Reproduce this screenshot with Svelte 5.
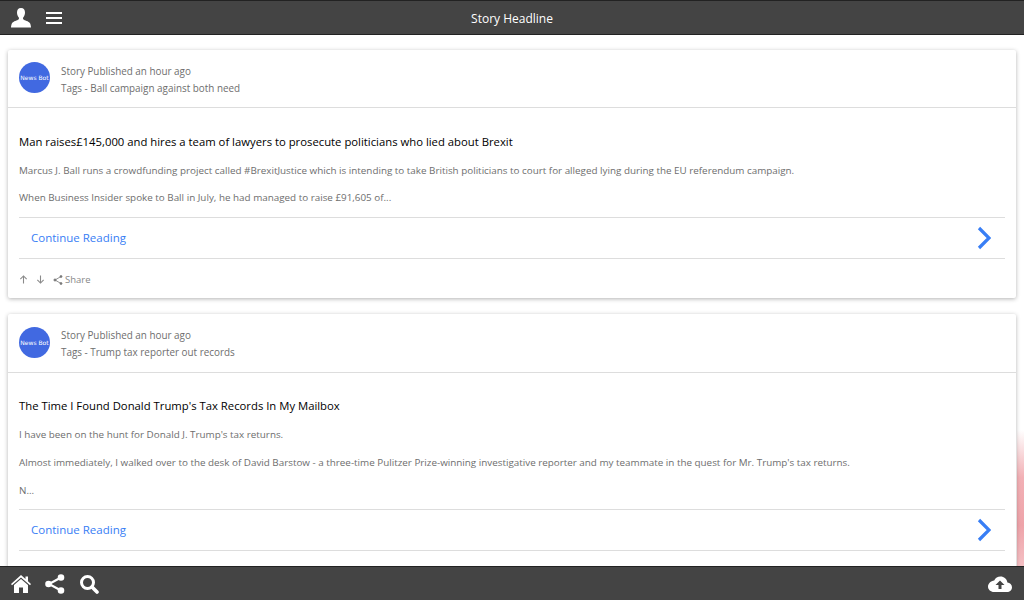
<script>
  const stories = [
    {
      tags: "Ball campaign against both need",
      title: "Man raises£145,000 and hires a team of lawyers to prosecute politicians who lied about Brexit",
      paras: [
        "Marcus J. Ball runs a crowdfunding project called #BrexitJustice which is intending to take British politicians to court for alleged lying during the EU referendum campaign.",
        "When Business Insider spoke to Ball in July, he had managed to raise £91,605 of..."
      ]
    },
    {
      tags: "Trump tax reporter out records",
      title: "The Time I Found Donald Trump's Tax Records In My Mailbox",
      paras: [
        "I have been on the hunt for Donald J. Trump's tax returns.",
        "Almost immediately, I walked over to the desk of David Barstow - a three-time Pulitzer Prize-winning investigative reporter and my teammate in the quest for Mr. Trump's tax returns.",
        "N..."
      ]
    }
  ];
</script>

<div class="page">
  <header class="topbar">
    <svg class="user" viewBox="0 0 20 20" width="20" height="20" fill="#fff">
      <path d="M10 0C7.2 0 6 2 6 4.6c0 2 .7 3.8 1.8 5 .3.4.3 1.500-.3 2-.9.8-5.200 1.700-6.500 3.700C.5 16.200 0 18 0 19.500h20c0-1.500-.5-3.300-1-4.200-1.300-2-5.600-2.900-6.500-3.700-.6-.5-.6-1.600-.3-2 1.100-1.200 1.800-3 1.800-5C14 2 12.800 0 10 0z"/>
    </svg>
    <div class="burger"><span></span><span></span><span></span></div>
    <h1>Story Headline</h1>
  </header>

  <main class="feed">
    <div class="blush"></div>
    {#each stories as s, i}
      <article class="card">
        <div class="meta">
          <div class="avatar">News Bot</div>
          <div class="metatext">
            <div>Story Published an hour ago</div>
            <div>Tags - {s.tags}</div>
          </div>
        </div>
        <div class="body">
          <h2>{s.title}</h2>
          {#each s.paras as p}
            <p>{p}</p>
          {/each}
          <div class="more">
            <span>Continue Reading</span>
            <svg viewBox="0 0 14 24" width="14" height="24" fill="none" stroke="#387ef5" stroke-width="3.200">
              <path d="M2 2l10 10L2 22"/>
            </svg>
          </div>
          <!-- second card's row sits under the bottom bar -->
          {#if i === 0}
            <div class="actions">
              <svg viewBox="0 0 10 10" width="9" height="9" fill="none" stroke="#8a8a8a" stroke-width="1.200"><path d="M5 9.500V1M1.500 4.500L5 1l3.500 3.500"/></svg>
              <svg class="down" viewBox="0 0 10 10" width="9" height="9" fill="none" stroke="#8a8a8a" stroke-width="1.200"><path d="M5 .5V9M1.500 5.500L5 9l3.500-3.500"/></svg>
              <span class="share">
                <svg viewBox="0 0 10 10" width="10" height="10" fill="#777" stroke="#777" stroke-width=".8"><path d="M8 1.500L2 5l6 3.500" fill="none"/><circle cx="8" cy="1.500" r="1"/><circle cx="2" cy="5" r="1.100"/><circle cx="8" cy="8.500" r="1"/></svg>
                Share
              </span>
            </div>
          {:else}
            <div class="actions"></div>
          {/if}
        </div>
      </article>
    {/each}
  </main>

  <footer class="bottombar">
    <div class="left">
      <svg viewBox="0 0 20 20" width="20" height="20" fill="#fff">
        <path d="M10 1L0 10l1 1.200L10 3.500l9 7.700 1-1.200-3-2.700V2.500h-2.500v2.600L10 1z"/>
        <path d="M10 5L3 11v8h5v-5.500h4V19h5v-8l-7-6z"/>
      </svg>
      <svg viewBox="0 0 20 20" width="20" height="20" fill="#fff" stroke="#fff" stroke-width="2.200">
        <path d="M16 3.500L4 10l12 6.500" fill="none"/>
        <circle cx="16" cy="3.500" r="2.200"/><circle cx="3.500" cy="10" r="2.200"/><circle cx="16" cy="16.500" r="2.200"/>
      </svg>
      <svg viewBox="0 0 20 20" width="20" height="20" fill="none" stroke="#fff">
        <circle cx="8.500" cy="8.500" r="6" stroke-width="3"/>
        <path d="M13 13l5 5" stroke-width="3.600" stroke-linecap="round"/>
      </svg>
    </div>
    <svg viewBox="0 0 24 16" width="24" height="16">
      <path fill="#fff" d="M19.400 6.500C18.900 3 16 .5 12.500.5 9.700.5 7.300 2.100 6.200 4.400 2.900 4.700 0 7.400 0 10.500 0 13.600 2.700 16 6 16h13c2.800 0 5-2.100 5-4.800 0-2.500-2-4.500-4.600-4.700z"/>
      <path fill="#444" d="M12 4.500l4.500 4.500h-3v4h-3V9h-3z"/>
    </svg>
  </footer>
</div>

<style>
  :global(body) {
    margin: 0;
    font-family: "Open Sans", "Liberation Sans", sans-serif;
  }

  .page {
    width: 1024px;
    height: 600px;
    display: flex;
    flex-direction: column;
    overflow: hidden;
    background: #fff;
  }

  .topbar {
    flex: none;
    height: 33px;
    box-sizing: content-box;
    border-top: 1px solid #222;
    border-bottom: 1px solid #222;
    background: #444;
    display: flex;
    align-items: center;
    padding-left: 11px;
    position: relative;
  }
  .topbar h1 {
    position: absolute;
    left: 0;
    right: 0;
    margin: 0;
    padding-top: 2px;
    text-align: center;
    color: #fff;
    font-size: 12px;
    font-weight: 400;
  }
  .user { margin-right: 15px; }
  .burger {
    display: flex;
    flex-direction: column;
    gap: 3px;
    margin-top: 1px;
  }
  .burger span {
    display: block;
    width: 16px;
    height: 2px;
    background: #fff;
  }

  .feed {
    flex: 1;
    min-height: 0;
    overflow: hidden;
    padding: 15px 8px 0;
    display: flex;
    flex-direction: column;
    gap: 16.4px;
    position: relative;
  }
  .blush {
    position: absolute;
    right: 0;
    top: 395px;
    width: 7px;
    height: 136px;
    background: linear-gradient(to bottom, #fff, #f2b0b5 35%, #eea3a9 70%, #f4bfc3);
  }

  .card {
    flex: none;
    background: #fff;
    position: relative;
    border-radius: 2px;
    box-shadow: 0 1px 4px rgba(0, 0, 0, .3);
  }
  .meta {
    display: flex;
    align-items: center;
    height: 57.3px;
    padding-left: 11px;
    border-bottom: 1px solid #ddd;
  }
  .avatar {
    flex: none;
    width: 31px;
    height: 31px;
    margin-bottom: 2px;
    border-radius: 50%;
    background: #4169e1;
    color: #fff;
    font-family: "DejaVu Sans", sans-serif;
    font-size: 6px;
    line-height: 31px;
    text-align: center;
    white-space: nowrap;
    margin-right: 11px;
  }
  .metatext {
    font-size: 9.9px;
    line-height: 17px;
    color: #6e6e6e;
    padding-top: 2px;
  }

  .body { padding: 0 11px; }
  h2 {
    margin: 0;
    padding-top: 24.6px;
    font-size: 11.3px;
    line-height: 18px;
    font-weight: 400;
    color: #000;
  }
  p {
    margin: 9.8px 0 0;
    font-size: 9.85px;
    line-height: 18px;
    color: #6e6e6e;
  }
  .more {
    margin-top: 10.3px;
    height: 39.8px;
    border-top: 1px solid #ddd;
    border-bottom: 1px solid #ddd;
    display: flex;
    align-items: center;
    justify-content: space-between;
    padding: 0 14px 0 12px;
    color: #387ef5;
    font-size: 11.5px;
  }
  .actions {
    height: 36.4px;
    padding-top: 3px;
    display: flex;
    align-items: center;
    color: #888;
    font-size: 9.5px;
  }
  .down { margin-left: 8px; }
  .share {
    margin-left: 8px;
    display: flex;
    align-items: center;
    gap: 2px;
  }

  .bottombar {
    flex: none;
    height: 33px;
    border-top: 1px solid #222;
    background: #444;
    display: flex;
    align-items: center;
    justify-content: space-between;
    padding: 0 12px 0 11px;
  }
  .left {
    display: flex;
    gap: 14px;
  }
</style>
